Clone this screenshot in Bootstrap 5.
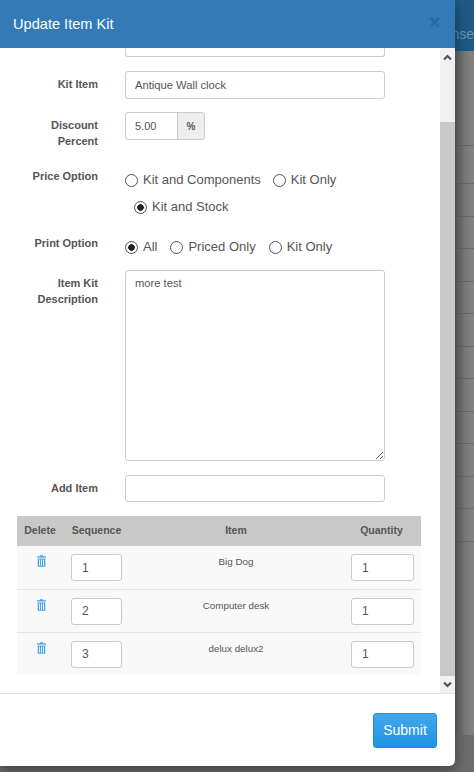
<!DOCTYPE html>
<html lang="en">
<head>
<meta charset="utf-8">
<title>Update Item Kit</title>
<link rel="stylesheet" href="https://cdn.jsdelivr.net/npm/bootstrap@5.3.0/dist/css/bootstrap.min.css">
<style>
html,body{height:100%;overflow:hidden}
body{font-family:"Liberation Sans",Arial,sans-serif;background:#7d7d7d;color:#555;font-size:12px}
.page-under{height:772px;background:linear-gradient(90deg,#666 455px,#7a7a7a 466px,#828282)}
.under-top{height:51px;flex:none;background:#1d5a86;color:#6d93ad;font-size:14px;padding-top:24px}
.under-row{height:32.5px;flex:none;border-bottom:1px solid #666}
.under-first{height:95px}
.under-second{height:38px}
.under-end{flex:1 1 auto}
.under-foot{height:37px;flex:none;background:#6c6c6c}
.kit-dialog{position:absolute;top:0;left:0;width:455px;height:766px;border:0;border-radius:0 0 6px 0;box-shadow:0 4px 14px rgba(0,0,0,.45);overflow:hidden;background:#fff}
.kit-head{height:48px;flex:none;background:#337ab7;color:#fff;border:0;border-radius:0;padding:0 13px;position:relative}
.kit-title{font-size:14.6px;font-weight:400;line-height:1;margin:0}
.kit-close{position:absolute;left:429px;top:12px;color:#2b689b;font-size:20px;font-weight:700;line-height:20px}
.kit-main{height:645px;flex:none;padding:0;overflow:hidden}
.kit-form{width:440px;flex:none}
.kit-bar{width:15px;flex:none;background:#f1f1f1;color:#505050}
.bar-arrow{flex:none;display:flex;align-items:center;justify-content:center}
.bar-arrow svg{width:9px;height:7px}
.arrow-up{height:17px;padding-top:2px}
.bar-gap{height:57px;flex:none}
.bar-thumb{flex:1 1 auto;background:#c9c9c9}
.arrow-down{height:17px}
.stub{width:260px;height:9px;margin-left:125px;border:1px solid #ccc;border-top:0;border-radius:0 0 3px 3px}
.field{display:flex;margin-top:14px}
.field-tight{margin-top:13px}
.field-label{width:98px;flex:none;text-align:right;font-weight:700;color:#555;font-size:11px;line-height:16px;margin-right:27px;padding-top:5px}
.kit-input{width:260px;height:28px;border:1px solid #ccc;border-radius:3px;padding:0 9px;font-size:11.2px;color:#555;box-shadow:none}
.add-input{height:27px}
.kit-area{height:191px;resize:both;padding:4px 9px;line-height:16px;min-height:0}
.pct-group{width:81px;flex-wrap:nowrap;align-self:flex-start}
.pct-input{width:53px!important;flex:none!important;height:28px;border:1px solid #ccc;border-radius:3px 0 0 3px;padding:0 9px;font-size:11px;color:#555;box-shadow:none}
.pct-add{width:28px;height:28px;justify-content:center;padding:0;font-size:10px;font-weight:700;background:#eee;border:1px solid #ccc;border-radius:0 3px 3px 0;color:#555}
.choice-wrap{width:300px}
.choice-line{display:flex;align-items:center;height:18px}
.pick-second{margin-top:9px;padding-left:9px}
.print-line{gap:13px}
.choice{display:flex;align-items:center;font-size:13px;color:#555;margin:0;padding:0;min-height:0}
.choice .form-check-input{float:none;margin:0 5px 0 0;width:13px;height:13px;border:1px solid #555;background:#fff;box-shadow:none;flex:none}
.choice .form-check-input:checked{background:radial-gradient(circle,#222 0 3px,#fff 3.6px);border-color:#555}
.kit-table{width:404px;margin:14px 0 0 17px;table-layout:fixed;border-collapse:collapse;--bs-table-bg:transparent}
.kit-table th{background:#c9c9c9;color:#555;font-size:10.5px;font-weight:700;text-align:center;height:30px;padding:0;border:0;vertical-align:middle;box-shadow:none}
.kit-table td{background:#f9f9f9;color:#555;font-size:9.8px;text-align:center;vertical-align:top;padding:8px 0 0;height:43px;border:0;border-bottom:1px solid #e4e4e4;box-shadow:none}
.kit-table tr:last-child td{border-bottom:0}
.kit-table .item-cell{padding-top:10px;line-height:12px}
.trash{width:9px;height:12px;display:block;margin:1px auto 0 20px}
.cell-seq,.cell-qty{height:27px;padding:0 10px;font-size:12px;border:1px solid #ccc;border-radius:3px;color:#555;box-shadow:none}
.cell-seq{width:51px;margin-left:8px}
.cell-qty{width:63px;margin-left:9px}
.kit-foot{flex:1 1 auto;border-top:1px solid #e5e5e5;padding:19px 18px 0 0;align-items:flex-start;justify-content:flex-end;border-radius:0}
.kit-submit{width:64px;height:35px;margin:0;padding:0;font-size:14px;color:#fff;border:1px solid #1c8fdc;border-radius:3px;background:linear-gradient(#42a7ec,#1f93e3)}
</style>
</head>
<body>
<div class="page-under d-flex flex-column">
  <div class="under-top d-flex justify-content-end">nse</div>
  <div class="under-row under-first"></div>
  <div class="under-row under-second"></div>
  <div class="under-row"></div><div class="under-row"></div><div class="under-row"></div>
  <div class="under-row"></div><div class="under-row"></div><div class="under-row"></div>
  <div class="under-row"></div><div class="under-row"></div><div class="under-row"></div>
  <div class="under-row"></div><div class="under-row"></div>
  <div class="under-end"></div>
  <div class="under-foot"></div>
</div>

<div class="modal-content kit-dialog d-flex flex-column">
  <div class="modal-header kit-head">
    <h4 class="kit-title">Update Item Kit</h4>
    <span class="kit-close">×</span>
  </div>
  <div class="modal-body kit-main d-flex">
    <form class="kit-form">
      <div class="stub"></div>
      <div class="field">
        <label class="field-label">Kit Item</label>
        <input class="form-control kit-input" type="text" value="Antique Wall clock">
      </div>
      <div class="field field-tight">
        <label class="field-label">Discount<br>Percent</label>
        <div class="input-group pct-group">
          <input class="form-control pct-input" type="text" value="5.00">
          <span class="input-group-text pct-add">%</span>
        </div>
      </div>
      <div class="field">
        <label class="field-label">Price Option</label>
        <div class="choice-wrap">
          <div class="choice-line gap-2 mt-2">
            <label class="form-check choice"><input class="form-check-input" type="radio" name="price">Kit and Components</label>
            <label class="form-check choice ms-1"><input class="form-check-input" type="radio" name="price">Kit Only</label>
          </div>
          <div class="choice-line pick-second">
            <label class="form-check choice"><input class="form-check-input" type="radio" name="price" checked>Kit and Stock</label>
          </div>
        </div>
      </div>
      <div class="field">
        <label class="field-label">Print Option</label>
        <div class="choice-wrap">
          <div class="choice-line print-line mt-2">
            <label class="form-check choice"><input class="form-check-input" type="radio" name="print" checked>All</label>
            <label class="form-check choice"><input class="form-check-input" type="radio" name="print">Priced Only</label>
            <label class="form-check choice"><input class="form-check-input" type="radio" name="print">Kit Only</label>
          </div>
        </div>
      </div>
      <div class="field">
        <label class="field-label">Item Kit Description</label>
        <textarea class="form-control kit-input kit-area">more test</textarea>
      </div>
      <div class="field">
        <label class="field-label">Add Item</label>
        <input class="form-control kit-input add-input" type="text">
      </div>
      <table class="table kit-table">
        <colgroup><col style="width:46px"><col style="width:67px"><col style="width:212px"><col style="width:79px"></colgroup>
        <thead><tr><th>Delete</th><th>Sequence</th><th>Item</th><th>Quantity</th></tr></thead>
        <tbody>
          <tr>
            <td><svg class="trash" viewBox="0 0 10 13"><path fill="#4aa5e6" d="M3.5 0h3l.4 1.3H10v1.4H0V1.3h3.1zM.8 3.6h8.4V13H.8zm1.5 1.2v7h1v-7zm2.2 0v7h1v-7zm2.2 0v7h1v-7z"/></svg></td>
            <td><input class="form-control cell-seq" type="text" value="1"></td>
            <td class="item-cell">Big Dog</td>
            <td><input class="form-control cell-qty" type="text" value="1"></td>
          </tr>
          <tr>
            <td><svg class="trash" viewBox="0 0 10 13"><path fill="#4aa5e6" d="M3.5 0h3l.4 1.3H10v1.4H0V1.3h3.1zM.8 3.6h8.4V13H.8zm1.5 1.2v7h1v-7zm2.2 0v7h1v-7zm2.2 0v7h1v-7z"/></svg></td>
            <td><input class="form-control cell-seq" type="text" value="2"></td>
            <td class="item-cell">Computer desk</td>
            <td><input class="form-control cell-qty" type="text" value="1"></td>
          </tr>
          <tr>
            <td><svg class="trash" viewBox="0 0 10 13"><path fill="#4aa5e6" d="M3.5 0h3l.4 1.3H10v1.4H0V1.3h3.1zM.8 3.6h8.4V13H.8zm1.5 1.2v7h1v-7zm2.2 0v7h1v-7zm2.2 0v7h1v-7z"/></svg></td>
            <td><input class="form-control cell-seq" type="text" value="3"></td>
            <td class="item-cell">delux delux2</td>
            <td><input class="form-control cell-qty" type="text" value="1"></td>
          </tr>
        </tbody>
      </table>
    </form>
    <div class="kit-bar d-flex flex-column">
      <div class="bar-arrow arrow-up"><svg viewBox="0 0 9 7"><path d="M1 5.5 4.5 2 8 5.5" fill="none" stroke="currentColor" stroke-width="2"/></svg></div>
      <div class="bar-gap"></div>
      <div class="bar-thumb"></div>
      <div class="bar-arrow arrow-down"><svg viewBox="0 0 9 7"><path d="M1 1.5 4.5 5 8 1.5" fill="none" stroke="currentColor" stroke-width="2"/></svg></div>
    </div>
  </div>
  <div class="modal-footer kit-foot">
    <button class="btn btn-primary kit-submit" type="button">Submit</button>
  </div>
</div>
<script src="https://cdn.jsdelivr.net/npm/bootstrap@5.3.0/dist/js/bootstrap.bundle.min.js"></script>
</body>
</html>
